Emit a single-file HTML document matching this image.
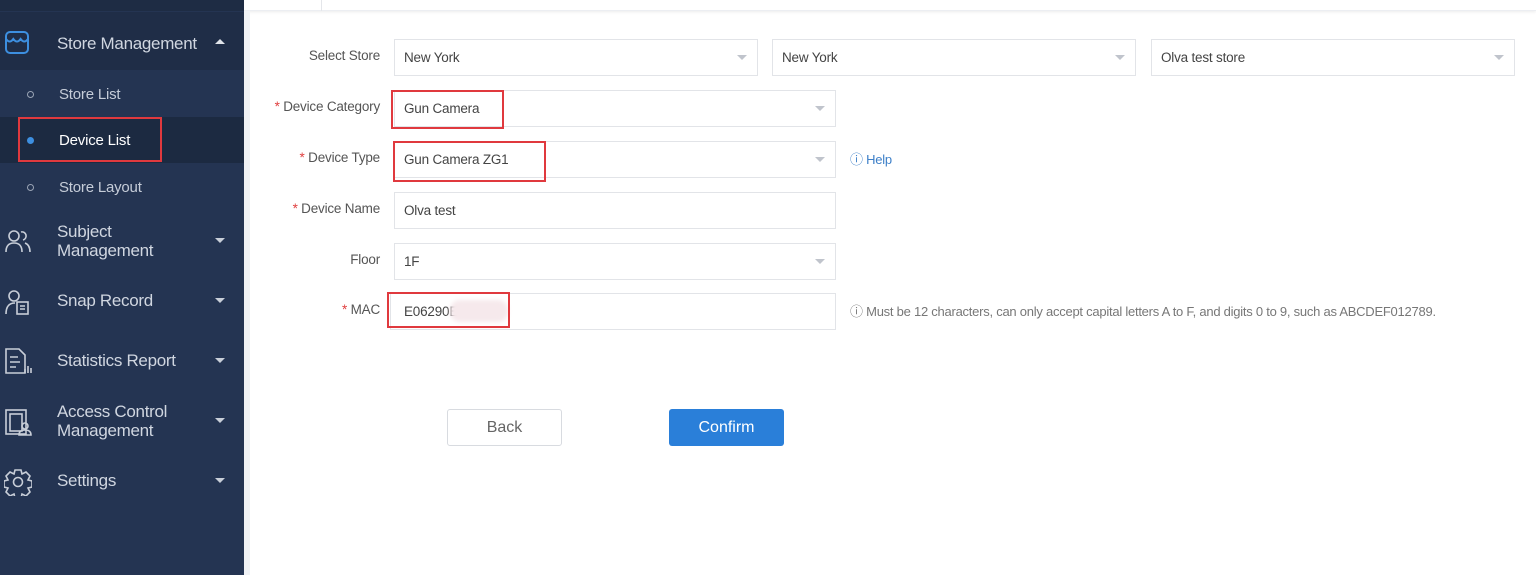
<!DOCTYPE html>
<html><head><meta charset="utf-8"><style>
*{box-sizing:border-box;margin:0;padding:0}
body{width:1536px;height:575px;overflow:hidden;background:#fff;font-family:"Liberation Sans",sans-serif;position:relative}
.sb{position:absolute;left:0;top:0;width:244px;height:575px;background:#243452;color:#d5dbe5}
.abs{position:absolute}
.mi{position:absolute;left:57px;font-size:17px;letter-spacing:-0.3px;color:#d0d6e0;line-height:19px}
.car{position:absolute;left:215px;width:0;height:0;border-left:5px solid transparent;border-right:5px solid transparent;border-top:5px solid #c8ced8}
.sub{position:absolute;left:59px;font-size:15px;color:#c5ccd8;letter-spacing:-0.2px}
.dot{position:absolute;left:27px;width:7px;height:7px;border:1px solid #9aa4b5;border-radius:50%}
.lbl{position:absolute;font-size:13.5px;color:#555;text-align:right;width:200px;letter-spacing:-0.2px}
.lbl b{color:#e04040;font-weight:normal}
.box{position:absolute;border:1px solid #e2e4e8;height:37px;background:#fff;font-size:13.5px;color:#444;padding:10px 9px;letter-spacing:-0.2px}
.arr{position:absolute;right:10px;top:15px;border-left:5px solid transparent;border-right:5px solid transparent;border-top:5px solid #c0c4cc}
.red{position:absolute;border:2px solid #e0393e}
.hint{position:absolute;font-size:13px;color:#777;letter-spacing:-0.25px}
</style></head><body>
<div class="sb">
  <div class="abs" style="left:0;top:0;width:244px;height:11px;background:#1e2c44"></div>
  <div class="abs" style="left:0;top:12px;width:244px;height:58px;background:#1f2d47"></div>
  <div class="abs" style="left:0;top:117px;width:244px;height:46px;background:#1c2a41"></div>
  <svg class="abs" style="left:4px;top:29px" width="26" height="26" viewBox="0 0 26 26" fill="none" stroke="#3d8fe0" stroke-width="2"><rect x="2" y="3" width="22" height="21" rx="4"/><path d="M2 10 q3.7 5 7.3 0 q3.7 5 7.3 0 q3.7 5 7.4 0"/></svg>
  <div class="mi" style="top:34px">Store Management</div>
  <div class="abs" style="left:215px;top:39px;border-left:5px solid transparent;border-right:5px solid transparent;border-bottom:5px solid #e0e4ea"></div>
  <div class="dot" style="top:91px"></div><div class="sub" style="top:86px">Store List</div>
  <div class="abs" style="left:27px;top:137px;width:7px;height:7px;border-radius:50%;background:#3d8fe0"></div>
  <div class="sub" style="top:132px;color:#fff">Device List</div>
  <div class="red" style="left:18px;top:117px;width:144px;height:45px"></div>
  <div class="dot" style="top:184px"></div><div class="sub" style="top:179px">Store Layout</div>
  <svg class="abs" style="left:4px;top:228px" width="28" height="26" viewBox="0 0 28 26" fill="none" stroke="#c8ced8" stroke-width="1.6"><circle cx="10" cy="8" r="5"/><path d="M2 24 q0-9 8-9 q8 0 8 9"/><path d="M17 4 a4 4 0 0 1 2 8 M21 15 q5 2 5 9"/></svg>
  <div class="mi" style="top:222px">Subject<br>Management</div><div class="car" style="top:238px"></div>
  <svg class="abs" style="left:4px;top:288px" width="28" height="28" viewBox="0 0 28 28" fill="none" stroke="#c8ced8" stroke-width="1.6"><circle cx="10" cy="8" r="5"/><path d="M2 26 q0-11 9-11"/><rect x="13" y="14" width="11" height="12"/><path d="M16 18h5M16 21h5"/></svg>
  <div class="mi" style="top:291px">Snap Record</div><div class="car" style="top:298px"></div>
  <svg class="abs" style="left:4px;top:347px" width="28" height="28" viewBox="0 0 28 28" fill="none" stroke="#c8ced8" stroke-width="1.6"><path d="M2 2h13l6 6v18H2z"/><path d="M6 10h8M6 15h10M6 20h6"/><path d="M21 22v4M24 19v7M27 21v5"/></svg>
  <div class="mi" style="top:351px">Statistics Report</div><div class="car" style="top:358px"></div>
  <svg class="abs" style="left:4px;top:408px" width="28" height="28" viewBox="0 0 28 28" fill="none" stroke="#c8ced8" stroke-width="1.6"><rect x="2" y="2" width="20" height="24"/><rect x="6" y="6" width="12" height="17"/><circle cx="21" cy="18" r="3"/><path d="M15 27 q0-5 6-5 q6 0 6 5z"/></svg>
  <div class="mi" style="top:402px">Access Control<br>Management</div><div class="car" style="top:418px"></div>
  <svg class="abs" style="left:4px;top:468px" width="28" height="28" viewBox="0 0 28 28" fill="none" stroke="#c8ced8" stroke-width="1.6"><path d="M11 2h6l1 4 4-2 4 4-2 4 4 1v6l-4 1 2 4-4 4-4-2-1 4h-6l-1-4-4 2-4-4 2-4-4-1v-6l4-1-2-4 4-4 4 2z"/><circle cx="14" cy="14" r="4.5"/></svg>
  <div class="mi" style="top:471px">Settings</div><div class="car" style="top:478px"></div>
</div>
<div class="abs" style="left:244px;top:0;width:1292px;height:11px;background:#fff;box-shadow:0 1px 3px rgba(0,0,0,0.08);border-bottom:1px solid #eceef2"></div>
<div class="abs" style="left:321px;top:0;width:1px;height:11px;background:#e4e6ea"></div>
<div class="abs" style="left:244px;top:11px;width:6px;height:564px;background:#f0f2f5"></div>

<div class="lbl" style="left:180px;top:48px">Select Store</div>
<div class="box" style="left:394px;top:39px;width:364px">New York<span class="arr"></span></div>
<div class="box" style="left:772px;top:39px;width:364px">New York<span class="arr"></span></div>
<div class="box" style="left:1151px;top:39px;width:364px">Olva test store<span class="arr"></span></div>

<div class="lbl" style="left:180px;top:99px"><b>* </b>Device Category</div>
<div class="box" style="left:394px;top:90px;width:442px">Gun Camera<span class="arr"></span></div>
<div class="red" style="left:391px;top:90px;width:113px;height:39px"></div>

<div class="lbl" style="left:180px;top:150px"><b>* </b>Device Type</div>
<div class="box" style="left:394px;top:141px;width:442px">Gun Camera ZG1<span class="arr"></span></div>
<div class="red" style="left:393px;top:141px;width:153px;height:41px"></div>
<div class="hint" style="left:850px;top:149px;color:#3c7fc8">ⓘ Help</div>

<div class="lbl" style="left:180px;top:201px"><b>* </b>Device Name</div>
<div class="box" style="left:394px;top:192px;width:442px">Olva test</div>

<div class="lbl" style="left:180px;top:252px">Floor</div>
<div class="box" style="left:394px;top:243px;width:442px">1F<span class="arr"></span></div>

<div class="lbl" style="left:180px;top:302px"><b>* </b>MAC</div>
<div class="box" style="left:390px;top:293px;width:446px;padding-left:13px">E06290E</div>
<div class="abs" style="left:450px;top:300px;width:58px;height:22px;background:#f6e9ec;border-radius:10px;filter:blur(2px)"></div>
<div class="red" style="left:387px;top:292px;width:123px;height:36px"></div>
<div class="hint" style="left:850px;top:301px">ⓘ Must be 12 characters, can only accept capital letters A to F, and digits 0 to 9, such as ABCDEF012789.</div>

<div class="abs" style="left:447px;top:409px;width:115px;height:37px;border:1px solid #d8dbe0;border-radius:3px;font-size:16px;color:#666;text-align:center;line-height:35px">Back</div>
<div class="abs" style="left:669px;top:409px;width:115px;height:37px;background:#2a7fd9;border-radius:3px;font-size:16px;color:#fff;text-align:center;line-height:37px">Confirm</div>
</body></html>
